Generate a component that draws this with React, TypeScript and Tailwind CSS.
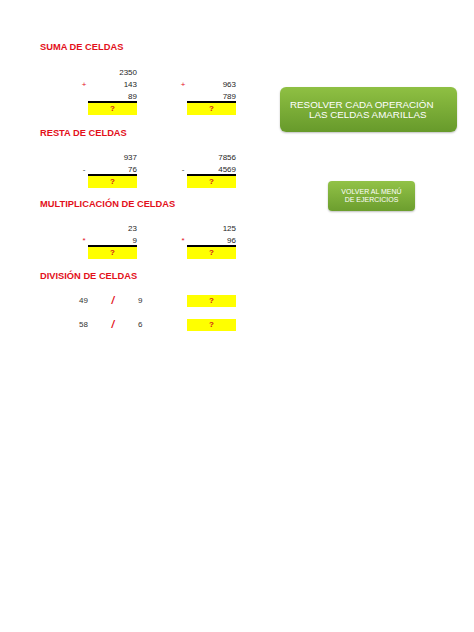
const font = { fontFamily: '"Liberation Sans", Arial, sans-serif' };

function Title({ text }: { text: string }) {
  return (
    <h2 className="h-[14px] text-[9.3px] leading-[14px] font-bold text-[#e3101a]">{text}</h2>
  );
}

function Num({ v, line }: { v?: string; line?: boolean }) {
  return (
    <div
      className={
        "h-[12px] text-right text-[8px] leading-[12px] text-[#262626] " +
        (line ? "border-b-2 border-black leading-[11px]" : "")
      }
    >
      {v}
    </div>
  );
}

function Op({ v, red }: { v?: string; red?: boolean }) {
  return (
    <div
      className={
        "h-[12px] text-center text-[8px] leading-[12px] " + (red ? "text-[#e3101a]" : "text-[#333333]")
      }
    >
      {v}
    </div>
  );
}

function Answer() {
  return (
    <div className="h-[12px] bg-[#ffff00] text-center text-[8px] leading-[12px] font-bold text-[#d0161a]">?</div>
  );
}

// one block of two stacked operations side by side
function Stack({ rows, red }: { rows: [string, string, string, string][]; red?: boolean }) {
  return (
    <div className="ml-[40px] grid grid-cols-[8px_49px_42px_8px_49px]">
      {rows.map((r, i) => {
        const last = i === rows.length - 1;
        return [
          <Op key={i + "a"} v={r[0]} red={red} />,
          <Num key={i + "b"} v={r[1]} line={last} />,
          <div key={i + "c"} />,
          <Op key={i + "d"} v={r[2]} red={red} />,
          <Num key={i + "e"} v={r[3]} line={last} />,
        ];
      })}
      <div />
      <Answer />
      <div />
      <div />
      <Answer />
    </div>
  );
}

function DivRow({ a, b }: { a: string; b: string }) {
  return (
    <div className="ml-[20px] grid h-[12px] grid-cols-[28px_50px_49px_49px] text-[8px] leading-[12px] text-[#333333]">
      <div className="text-right">{a}</div>
      <div className="text-center text-[10px] font-bold italic text-[#e3101a]">/</div>
      <div>{b}</div>
      <Answer />
    </div>
  );
}

export default function App() {
  return (
    <div className="flex h-[632px] w-[474px] bg-white" style={font}>
      <div className="w-[280px] pl-[40px] pt-[40px]">
        <Title text="SUMA DE CELDAS" />
        <div className="mt-[13px]">
          <Stack
            red
            rows={[
              ["", "2350", "", ""],
              ["+", "143", "+", "963"],
              ["", "89", "", "789"],
            ]}
          />
        </div>

        <div className="mt-[11px]">
          <Title text="RESTA DE CELDAS" />
        </div>
        <div className="mt-[12px]">
          <Stack
            rows={[
              ["", "937", "", "7856"],
              ["-", "76", "-", "4569"],
            ]}
          />
        </div>

        <div className="mt-[9px]">
          <Title text="MULTIPLICACIÓN DE CELDAS" />
        </div>
        <div className="mt-[12px]">
          <Stack
            red
            rows={[
              ["", "23", "", "125"],
              ["*", "9", "*", "96"],
            ]}
          />
        </div>

        <div className="mt-[10px]">
          <Title text="DIVISIÓN DE CELDAS" />
        </div>
        <div className="mt-[12px] flex flex-col gap-[12px]">
          <DivRow a="49" b="9" />
          <DivRow a="58" b="6" />
        </div>
      </div>

      <div className="flex flex-col pt-[87px]">
        <button className="h-[45px] w-[177px] rounded-[6px] bg-gradient-to-b from-[#8fc043] to-[#679a2b] text-left text-[9.8px] leading-[10px] text-white shadow-[0_1px_2px_rgba(0,0,0,0.25)]">
          <div className="pl-[10px]">RESOLVER CADA OPERACIÓN</div>
          <div className="pl-[29px]">LAS CELDAS AMARILLAS</div>
        </button>
        <button className="ml-[48px] mt-[49px] h-[30px] w-[87px] rounded-[4px] bg-gradient-to-b from-[#92c247] to-[#6c9e2e] text-center text-[7px] leading-[8px] text-white shadow-[0_1px_2px_rgba(0,0,0,0.25)]">
          <div>VOLVER AL MENÚ</div>
          <div>DE EJERCICIOS</div>
        </button>
      </div>
    </div>
  );
}
